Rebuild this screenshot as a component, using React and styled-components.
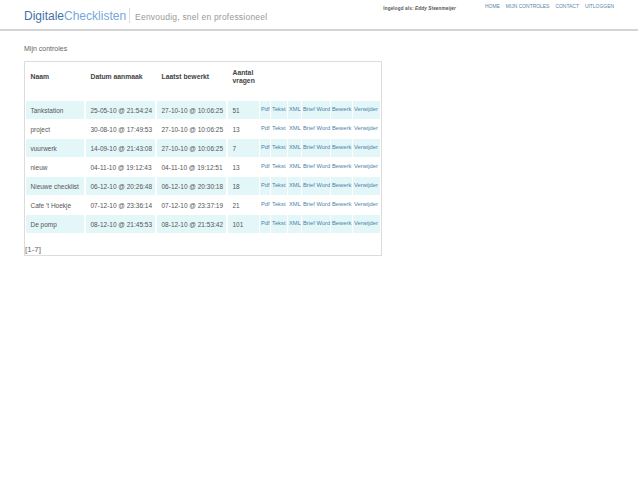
import React from 'react'
import styled, { createGlobalStyle } from 'styled-components'

const Global = createGlobalStyle`
  html, body { margin: 0; padding: 0; background: #fff; }
  body { font-family: "Liberation Sans", Arial, sans-serif; color: #444; }
`

const Header = styled.header`
  height: 29px;
  border-bottom: 2px solid #d4d4d4;
  padding-left: 24px;
  padding-right: 24px;
  display: flex;
  align-items: flex-start;
`
const Logo = styled.div`
  font-size: 12px;
  line-height: 16px;
  margin-top: 8px;
  padding-right: 3px;
  height: 15px;
  border-right: 1px solid #ddd;
  color: #3f71a8;
  span { color: #74a7dc; }
`
const Slogan = styled.div`
  font-size: 8.5px;
  line-height: 16px;
  margin-top: 9px;
  margin-left: 5px;
  color: #999;
  letter-spacing: 0.22px;
`
const Logged = styled.div`
  margin-left: auto;
  font-size: 4.6px;
  line-height: 8px;
  margin-top: 5px;
  font-weight: 700;
  color: #555;
  letter-spacing: 0.15px;
  em { font-style: italic; }
`
const Nav = styled.nav`
  display: flex;
  gap: 6px;
  margin-left: 29px;
  margin-top: 3px;
`
const NavLink = styled.a`
  font-size: 4.95px;
  line-height: 8px;
  color: #5b7fa6;
`
const Main = styled.main`
  padding: 13px 24px 0;
`
const Title = styled.div`
  font-size: 7px;
  line-height: 10px;
  color: #666;
  margin-bottom: 7px;
`
const Panel = styled.div`
  width: 356px;
  height: 193px;
  border: 1px solid #dcdcdc;
`
const Table = styled.table`
  width: 356px;
  table-layout: fixed;
  border-collapse: separate;
  border-spacing: 1px 0;
`
const Head = styled.th`
  box-sizing: border-box;
  width: ${p => p.$w}px;
  height: 39px;
  padding: 0 0 9px 4.5px;
  text-align: left;
  font-size: 6.8px;
  line-height: 8px;
  color: #444;
  vertical-align: middle;
`
const Cell = styled.td`
  box-sizing: border-box;
  height: 19px;
  padding: 0 0 0 4.5px;
  font-size: 6.5px;
  color: #555;
  white-space: nowrap;
  border-bottom: 1px solid #fff;
  background: ${p => (p.$alt ? '#e3f7f9' : 'transparent')};
  &:not(:nth-child(4)) { border-right: 1px solid #fff; }
`
const LinkCell = styled.td`
  box-sizing: border-box;
  padding: 0 0 3px 1px;
  font-size: 5.8px;
  color: #4f7fa8;
  white-space: nowrap;
  border-bottom: 1px solid #fff;
  background: ${p => (p.$alt ? '#e3f7f9' : 'transparent')};
`
const Pager = styled.div`
  font-size: 8px;
  line-height: 10px;
  color: #666;
  margin-top: 11px;
`

const rows = [
  ['Tankstation', '25-05-10 @ 21:54:24', '27-10-10 @ 10:06:25', '51'],
  ['project', '30-08-10 @ 17:49:53', '27-10-10 @ 10:06:25', '13'],
  ['vuurwerk', '14-09-10 @ 21:43:08', '27-10-10 @ 10:06:25', '7'],
  ['nieuw', '04-11-10 @ 19:12:43', '04-11-10 @ 19:12:51', '13'],
  ['Nieuwe checklist', '06-12-10 @ 20:26:48', '06-12-10 @ 20:30:18', '18'],
  ["Cafe 't Hoekje", '07-12-10 @ 23:36:14', '07-12-10 @ 23:37:19', '21'],
  ['De pomp', '08-12-10 @ 21:45:53', '08-12-10 @ 21:53:42', '101'],
]
const links = ['Pdf', 'Tekst', 'XML', 'Brief Word', 'Bewerk', 'Verwijder']
const linkWidths = [10, 16, 13, 28, 21, 27]

const App = () => {
  return (
    <>
      <Global />
      <Header>
        <Logo>Digitale<span>Checklisten</span></Logo>
        <Slogan>Eenvoudig, snel en professioneel</Slogan>
        <Logged>Ingelogd als: <em>Eddy Steenmeijer</em></Logged>
        <Nav>
          <NavLink>HOME</NavLink>
          <NavLink>MIJN CONTROLES</NavLink>
          <NavLink>CONTACT</NavLink>
          <NavLink>UITLOGGEN</NavLink>
        </Nav>
      </Header>
      <Main>
        <Title>Mijn controles</Title>
        <Panel>
          <Table>
            <thead>
              <tr>
                <Head $w={59}>Naam</Head>
                <Head $w={70}>Datum aanmaak</Head>
                <Head $w={70}>Laatst bewerkt</Head>
                <Head $w={31}>Aantal vragen</Head>
                {linkWidths.map((w, i) => <Head key={i} $w={w} />)}
              </tr>
            </thead>
            <tbody>
              {rows.map((row, r) => (
                <tr key={row[0]}>
                  {row.map((text, c) => <Cell key={c} $alt={r % 2 === 0}>{text}</Cell>)}
                  {links.map(l => <LinkCell key={l} $alt={r % 2 === 0}>{l}</LinkCell>)}
                </tr>
              ))}
            </tbody>
          </Table>
          <Pager>[1-7]</Pager>
        </Panel>
      </Main>
    </>
  )
}

export default App
